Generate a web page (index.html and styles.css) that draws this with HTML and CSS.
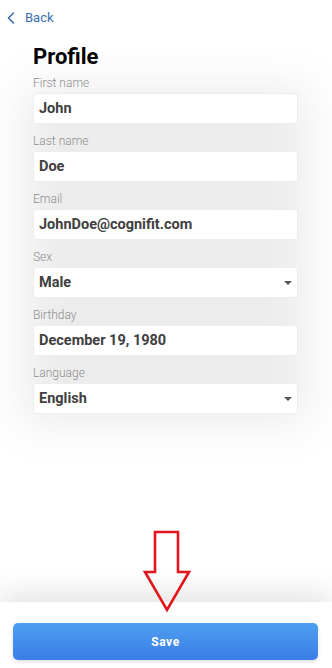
FILE: index.html
```html
<!DOCTYPE html>
<html lang="en">
<head>
<meta charset="utf-8">
<title>Profile</title>
<link rel="stylesheet" href="styles.css">
</head>
<body>
<div class="page">
  <header class="topbar">
    <a class="back" href="#">
      <svg class="chev" width="8" height="12" viewBox="0 0 8 12"><path d="M6.5 1 L1.5 6 L6.5 11" fill="none" stroke="currentColor" stroke-width="1.6" stroke-linecap="round" stroke-linejoin="round"/></svg>
      <span>Back</span>
    </a>
  </header>
  <main class="content">
    <h1 class="title">Profile</h1>
    <div class="card">
      <div class="field">
        <div class="label">First name</div>
        <div class="input">John</div>
      </div>
      <div class="field">
        <div class="label">Last name</div>
        <div class="input">Doe</div>
      </div>
      <div class="field">
        <div class="label">Email</div>
        <div class="input">JohnDoe@cognifit.com</div>
      </div>
      <div class="field">
        <div class="label">Sex</div>
        <div class="input select">Male<span class="caret"></span></div>
      </div>
      <div class="field">
        <div class="label">Birthday</div>
        <div class="input">December 19, 1980</div>
      </div>
      <div class="field">
        <div class="label">Language</div>
        <div class="input select">English<span class="caret"></span></div>
      </div>
    </div>
  </main>
  <footer class="footer">
    <button class="save">Save</button>
  </footer>
  <svg class="arrow" width="52" height="84" viewBox="0 0 52 84"><polygon points="14,2 37,2 37,42 48,42 26,80 4,42 14,42" fill="none" stroke="#e3141c" stroke-width="2.6" stroke-linejoin="miter"/></svg>
</div>
</body>
</html>
```
FILE: styles.css
```css
* { box-sizing: border-box; }
html, body { margin: 0; padding: 0; }
body {
  font-family: Roboto, "Liberation Sans", Arial, sans-serif;
  background: #fff;
}
.page {
  position: relative;
  height: 668px;
  display: flex;
  flex-direction: column;
  overflow: hidden;
  isolation: isolate;
}
.topbar {
  padding: 10px 0 0 7px;
  height: 27px;
}
.back {
  display: flex;
  align-items: center;
  gap: 10px;
  color: #3a6fae;
  text-decoration: none;
  font-size: 13px;
  line-height: 16px;
}
.chev { display: block; }
.content {
  flex: 1;
  padding: 0 34px 0 33px;
}
.title {
  margin: 17px 0 0 0;
  font-size: 22px;
  line-height: 26px;
  font-weight: 700;
  color: #000;
}
.card {
  position: relative;
  margin-top: 6px;
  display: flex;
  flex-direction: column;
  gap: 10px;
}
.card::before {
  content: "";
  position: absolute;
  left: -10px;
  right: -10px;
  top: 10px;
  bottom: -10px;
  background: rgba(0,0,0,0.075);
  filter: blur(22px);
  z-index: -1;
}
.label {
  font-size: 12px;
  line-height: 14px;
  font-weight: 300;
  color: #8e8e8e;
  margin-bottom: 3px;
}
.input {
  height: 31px;
  background: #fff;
  border: 1px solid #ededed;
  border-radius: 3px;
  padding: 0 5px;
  display: flex;
  align-items: center;
  font-size: 14.5px;
  font-weight: 700;
  color: #404040;
}
.select { justify-content: space-between; }
.caret {
  width: 0; height: 0;
  border-left: 4px solid transparent;
  border-right: 4px solid transparent;
  border-top: 4px solid #555;
}
.footer {
  height: 66px;
  background: #fff;
  box-shadow: 0 -6px 32px rgba(0,0,0,0.13);
  padding: 21px 14px 0 13px;
}
.save {
  width: 100%;
  height: 37px;
  border: none;
  border-radius: 5px;
  background: linear-gradient(#4e9ff1, #3a7de6);
  color: #fff;
  font-family: Roboto, "Liberation Sans", Arial, sans-serif;
  font-weight: 700;
  font-size: 12px;
  letter-spacing: 0.6px;
  box-shadow: 0 2px 4px rgba(0,0,0,0.12);
}
.arrow {
  position: absolute;
  left: 141px;
  top: 530px;
}
```
